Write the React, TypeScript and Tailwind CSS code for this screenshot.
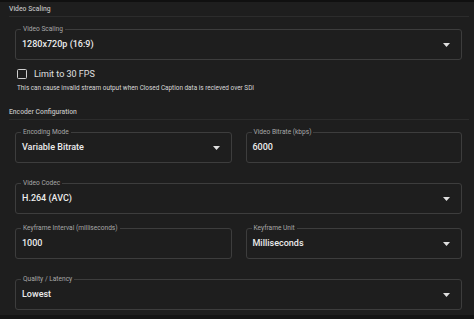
import React from "react";

// Flecha del select (triángulo relleno)
function Arrow() {
  return (
    <svg width="7" height="4" viewBox="0 0 7 4" className="shrink-0">
      <path d="M0 0 L7 0 L3.5 4 Z" fill="#e0e0e0" />
    </svg>
  );
}

// Campo con contorno y etiqueta en la muesca
function Field({ label, value, select, className }: { label: string; value: string; select?: boolean; className?: string }) {
  return (
    <div className={`relative h-[31px] rounded-[3px] border border-[#3d3d3d] flex items-center pl-[6px] pr-[11px] ${className || ""}`}>
      <span className="absolute left-[5px] top-[-5px] px-[2px] bg-[#1e1e1e] text-[6.6px] leading-[8px] text-[#a8a8a8]">
        {label}
      </span>
      <span className="flex-1 text-[9px] font-medium text-[#ececec] pt-[1px]">{value}</span>
      {select && <Arrow />}
    </div>
  );
}

function SectionHeader({ title }: { title: string }) {
  return (
    <div className="pl-[9px] pr-[5px]">
      <div className="text-[6.8px] leading-[10px] font-medium text-[#bdbdbd]">{title}</div>
      <div className="mt-[2px] h-px bg-[#2c2c2c]" />
    </div>
  );
}

export default function App() {
  return (
    <div className="w-[474px] h-[319px] bg-[#1e1e1e] overflow-hidden flex flex-col" style={{ fontFamily: "Roboto, 'Noto Sans', sans-serif" }}>
      <div className="h-[2px] bg-[#101010]" />
      <div className="pt-[2px]">
        <SectionHeader title="Video Scaling" />
      </div>

      <div className="pl-[15px] pr-[12px] mt-[12px]">
        <Field label="Video Scaling" value="1280x720p (16:9)" select />
      </div>

      <div className="pl-[17px] mt-[9px] flex items-center gap-[7px]">
        <div className="w-[10px] h-[10px] rounded-[1.5px] border-[1.5px] border-[#d0d0d0]" />
        <span className="text-[9px] leading-[10px] text-[#e0e0e0]">Limit to 30 FPS</span>
      </div>
      <div className="pl-[17px] mt-[5px] text-[6.4px] leading-[8px] text-[#d8d8d8]">
        This can cause invalid stream output when Closed Caption data is recieved over SDI
      </div>

      <div className="mt-[15px]">
        <SectionHeader title="Encoder Configuration" />
      </div>

      <div className="pl-[15px] pr-[12px] mt-[12px] flex flex-col">
        <div className="flex gap-[14px]">
          <Field label="Encoding Mode" value="Variable Bitrate" select className="flex-1" />
          <Field label="Video Bitrate (kbps)" value="6000" className="flex-1" />
        </div>
        <Field label="Video Codec" value="H.264 (AVC)" select className="mt-[20px]" />
        <div className="flex gap-[14px] mt-[14px]">
          <Field label="Keyframe Interval (milliseconds)" value="1000" className="flex-1" />
          <Field label="Keyframe Unit" value="Milliseconds" select className="flex-1" />
        </div>
        <Field label="Quality / Latency" value="Lowest" select className="mt-[20px]" />
      </div>
      <div className="flex-1" />
      <div className="h-[4px] bg-[#141414]" />
    </div>
  );
}
